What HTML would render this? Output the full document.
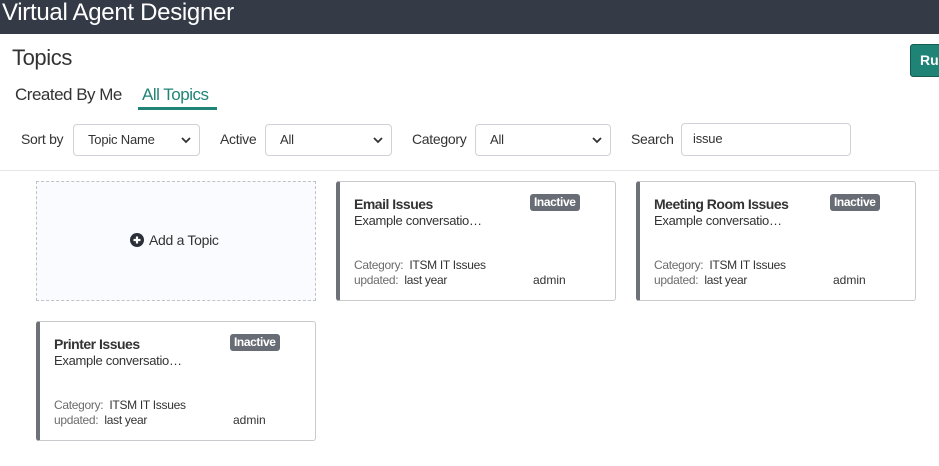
<!DOCTYPE html>
<html><head><meta charset="utf-8"><style>
*{margin:0;padding:0;box-sizing:border-box}
body{width:939px;height:466px;overflow:hidden;background:#fff;font-family:"Liberation Sans",sans-serif;color:#2e2e2e;position:relative}
.a{position:absolute;white-space:nowrap}
.hdr{left:0;top:0;width:939px;height:34px;background:#343a46}
.sel{position:absolute;height:32px;border:1px solid #cfd2d6;border-radius:4px;background:#fff;font-size:13px;line-height:30px;padding-left:14px;color:#333;letter-spacing:-.2px}
.sel svg{position:absolute;right:8px;top:11px}
.lbl{font-size:14px;color:#333;letter-spacing:-.3px}
.card{position:absolute;width:280px;height:120px;border:1px solid #c8cacd;border-left:4px solid #6e7178;border-radius:3px;background:#fff}
.card .t{position:absolute;left:14px;top:14px;font-size:14px;font-weight:bold;color:#333;letter-spacing:-.5px}
.card .b{position:absolute;left:190px;top:12px;background:#686c74;color:#fff;font-size:12px;font-weight:bold;padding:1px 4px;border-radius:3px;letter-spacing:-.4px;line-height:15px}
.card .d{position:absolute;left:14px;top:31px;font-size:13px;color:#333;letter-spacing:-.3px}
.card .c{position:absolute;left:14px;top:76px;font-size:12px;color:#333;letter-spacing:-.3px;line-height:15px}
.card .c span{color:#6c6c6c}
.card .m{position:absolute;left:193px;top:91px;font-size:12px;color:#333;line-height:15px}
</style></head><body>
<div class="a hdr"></div>
<div class="a" style="left:2px;top:-3px;font-size:24px;color:#fff;letter-spacing:-.3px;line-height:32px">Virtual Agent Designer</div>
<div class="a" style="left:12px;top:45px;font-size:22px;color:#333;letter-spacing:-.4px">Topics</div>
<div class="a" style="left:15px;top:85px;font-size:17px;color:#333;letter-spacing:-.5px">Created By Me</div>
<div class="a" style="left:142px;top:85px;font-size:17px;color:#1f8476;letter-spacing:-.5px">All Topics</div>
<div class="a" style="left:138px;top:107px;width:79px;height:3px;background:#1f8476"></div>
<div class="a" style="left:910px;top:44px;width:40px;height:33px;background:#1f8476;border:1px solid #155c52;border-radius:3px;color:#fff;font-weight:bold;font-size:14px;line-height:31px;padding-left:9px">Run</div>

<div class="a lbl" style="left:21px;top:131px">Sort by</div>
<div class="sel" style="left:73px;top:124px;width:127px">Topic Name<svg width="10" height="8"><path d="M1 2l4 4 4-4" stroke="#333" stroke-width="1.8" fill="none"/></svg></div>
<div class="a lbl" style="left:220px;top:131px">Active</div>
<div class="sel" style="left:265px;top:124px;width:127px">All<svg width="10" height="8"><path d="M1 2l4 4 4-4" stroke="#333" stroke-width="1.8" fill="none"/></svg></div>
<div class="a lbl" style="left:412px;top:131px">Category</div>
<div class="sel" style="left:475px;top:124px;width:136px">All<svg width="10" height="8"><path d="M1 2l4 4 4-4" stroke="#333" stroke-width="1.8" fill="none"/></svg></div>
<div class="a lbl" style="left:631px;top:131px">Search</div>
<div class="sel" style="left:681px;top:123px;width:170px;height:33px;padding-left:11px">issue</div>
<div class="a" style="left:0;top:170px;width:939px;height:1px;background:#e6e6e6"></div>

<div class="a" style="left:36px;top:181px;width:280px;height:120px;border:1px dashed #bfc2c6;background:#fafbfe"></div>
<div class="a" style="left:130px;top:232px;font-size:14px;color:#333;letter-spacing:-.3px"><svg width="14" height="14" style="vertical-align:-2px;margin-right:5px"><circle cx="7" cy="7" r="7" fill="#2a2f38"/><path d="M7 3.5v7M3.5 7h7" stroke="#fff" stroke-width="2.2"/></svg>Add a Topic</div>

<div class="card" style="left:336px;top:181px"><div class="t">Email Issues</div><div class="b">Inactive</div><div class="d">Example conversatio…</div><div class="c"><span>Category:</span>&nbsp; ITSM IT Issues<br><span>updated:</span>&nbsp; last year</div><div class="m">admin</div></div>
<div class="card" style="left:636px;top:181px"><div class="t">Meeting Room Issues</div><div class="b">Inactive</div><div class="d">Example conversatio…</div><div class="c"><span>Category:</span>&nbsp; ITSM IT Issues<br><span>updated:</span>&nbsp; last year</div><div class="m">admin</div></div>
<div class="card" style="left:36px;top:321px"><div class="t">Printer Issues</div><div class="b">Inactive</div><div class="d">Example conversatio…</div><div class="c"><span>Category:</span>&nbsp; ITSM IT Issues<br><span>updated:</span>&nbsp; last year</div><div class="m">admin</div></div>
</body></html>
